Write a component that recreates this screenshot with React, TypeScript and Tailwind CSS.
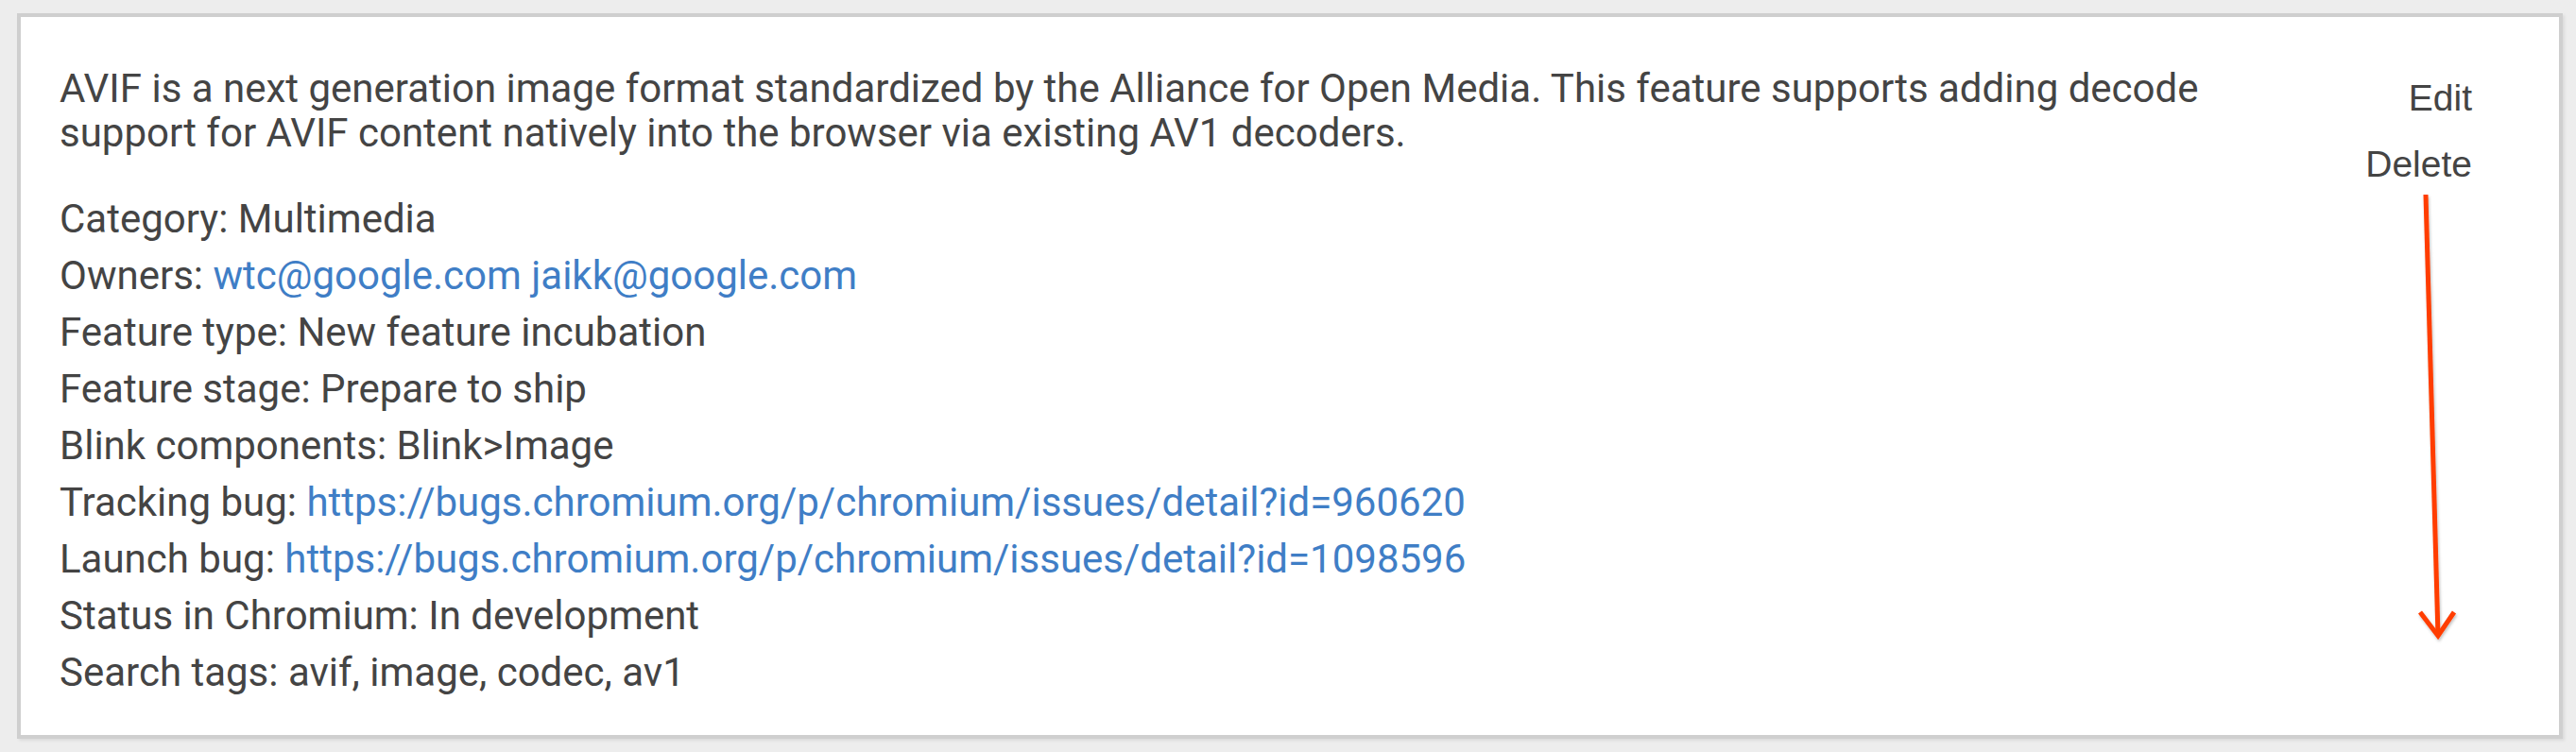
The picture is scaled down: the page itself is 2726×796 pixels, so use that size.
import React from "react";

const rows: { label: string; value: React.ReactNode }[] = [
  { label: "Category:", value: "Multimedia" },
  {
    label: "Owners:",
    value: (
      <>
        <a className="text-[#3f7ec6]">wtc@google.com</a>{" "}
        <a className="text-[#3f7ec6]">jaikk@google.com</a>
      </>
    ),
  },
  { label: "Feature type:", value: "New feature incubation" },
  { label: "Feature stage:", value: "Prepare to ship" },
  { label: "Blink components:", value: "Blink>Image" },
  {
    label: "Tracking bug:",
    value: <a className="text-[#3f7ec6]">https://bugs.chromium.org/p/chromium/issues/detail?id=960620</a>,
  },
  {
    label: "Launch bug:",
    value: <a className="text-[#3f7ec6]">https://bugs.chromium.org/p/chromium/issues/detail?id=1098596</a>,
  },
  { label: "Status in Chromium:", value: "In development" },
  { label: "Search tags:", value: "avif, image, codec, av1" },
];

export default function App() {
  return (
    <div className="relative w-[2726px] h-[796px] bg-[#ededed] pt-[14px] pl-[18px] pr-[14px] overflow-hidden">
      <div className="flex h-[768px] border-4 border-[#cfcfcf] bg-white shadow-[2px_2px_3px_rgba(0,0,0,0.08)]">
        <div
          className="flex-1 pl-[41px] pt-[52px] text-[#444444] text-[42px]"
          style={{ fontFamily: "Roboto, 'Noto Sans', sans-serif" }}
        >
          <p className="leading-[47px] mb-[38px] max-w-[2300px]">
            AVIF is a next generation image format standardized by the Alliance for Open Media. This feature supports adding decode support for AVIF content natively into the browser via existing AV1 decoders.
          </p>
          <div className="flex flex-col">
            {rows.map((r) => (
              <div key={r.label} className="leading-[60px] whitespace-nowrap">
                {r.label} {r.value}
              </div>
            ))}
          </div>
        </div>
        <div
          className="flex flex-col items-end pt-[64px] pr-[92px] text-[39px] leading-[44px] text-[#444444]"
          style={{ fontFamily: "'Liberation Sans', Arial, sans-serif" }}
        >
          <a>Edit</a>
          <a className="mt-[26px]">Delete</a>
        </div>
      </div>
      <svg
        className="absolute left-0 top-0 pointer-events-none"
        width="2726"
        height="796"
        viewBox="0 0 2726 796"
      >
        <defs>
          <filter id="sh" x="-20%" y="-20%" width="140%" height="140%">
            <feDropShadow dx="1" dy="2" stdDeviation="1.5" floodColor="#000" floodOpacity="0.25" />
          </filter>
        </defs>
        <g filter="url(#sh)" stroke="#ff3d00" strokeWidth="5" fill="none">
          <line x1="2567" y1="206" x2="2580" y2="673" />
          <polyline points="2561,648 2580,673 2597,648" strokeLinejoin="miter" />
        </g>
      </svg>
    </div>
  );
}
